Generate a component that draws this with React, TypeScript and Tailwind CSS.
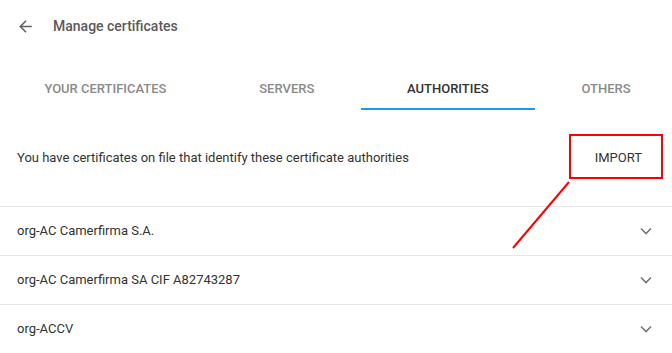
const rows = ["org-AC Camerfirma S.A.", "org-AC Camerfirma SA CIF A82743287", "org-ACCV"];

const tabs = ["Your certificates", "Servers", "Authorities", "Others"];

function Chevron() {
  return (
    <svg width="12" height="8" viewBox="0 0 12 8" className="text-[#757575]">
      <path d="M1 1.5l5 5 5-5" fill="none" stroke="currentColor" strokeWidth="1.6" />
    </svg>
  );
}

export default function App() {
  return (
    <div className="relative h-[353px] w-[672px] overflow-hidden bg-white font-['Roboto',sans-serif] text-[13px] text-[#333]">
      <div className="flex h-[52px] items-center">
        <div className="flex w-[50px] justify-center pl-[1px]">
          <svg width="19" height="19" viewBox="0 0 24 24" className="text-[#5f6368]">
            <path d="M20 11H7.83l5.59-5.59L12 4l-8 8 8 8 1.41-1.41L7.83 13H20v-2z" fill="currentColor" />
          </svg>
        </div>
        <h1 className="ml-[3px] text-[14px] font-medium text-[#5a5a5a]">Manage certificates</h1>
      </div>

      <div className="-ml-[2px] mt-[16px] flex h-[42px] w-[679px]">
        {tabs.map((t, i) => (
          <div
            key={t}
            className={
              "flex flex-auto items-center justify-center border-b-2 pt-[2px] text-[13px] font-medium uppercase " +
              (i === 2 ? "border-[#2196f3] text-[#333]" : "border-transparent text-[#8a8a8a]")
            }
          >
            {t}
          </div>
        ))}
      </div>

      <div className="flex h-[96px] items-center justify-between pl-[17px] pr-[30px]">
        <span>You have certificates on file that identify these certificate authorities</span>
        <button className="font-normal text-[#333]">IMPORT</button>
      </div>

      {rows.map((r) => (
        <div key={r} className="flex h-[49px] items-center justify-between border-t border-[#e8e8e8] pl-[17px] pr-[20px]">
          <span>{r}</span>
          <Chevron />
        </div>
      ))}

      {/* annotation overlay */}
      <div className="absolute left-[569px] top-[134px] h-[45px] w-[94px] border-2 border-[#ff0000]" />
      <svg className="absolute left-0 top-0" width="672" height="353">
        <line x1="569" y1="182" x2="513" y2="248" stroke="#ff0000" strokeWidth="2" />
      </svg>
    </div>
  );
}
